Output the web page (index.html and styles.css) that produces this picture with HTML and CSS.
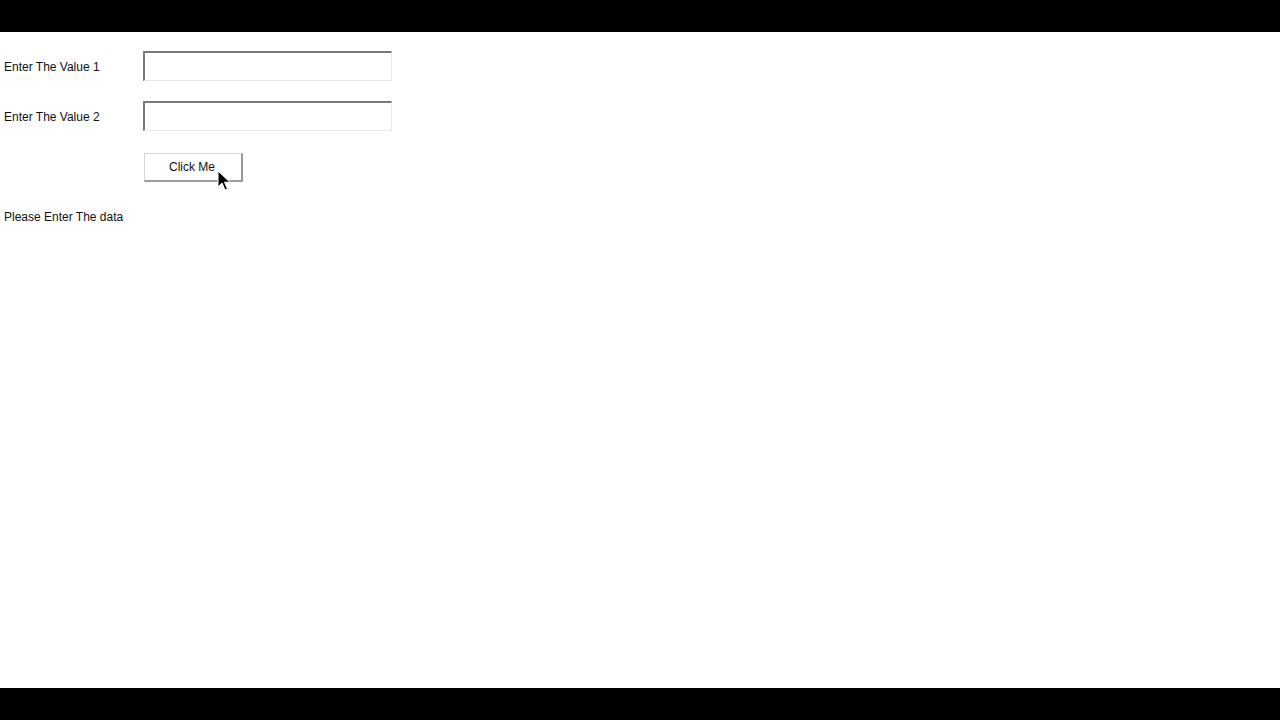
FILE: index.html
```html
<!DOCTYPE html>
<html>
<head>
<meta charset="utf-8">
<link rel="stylesheet" href="styles.css">
</head>
<body>
<div class="page">
  <div class="bar"></div>
  <main class="content">
    <div class="row">
      <label class="label" for="v1">Enter The Value 1</label>
      <input class="field" id="v1" type="text">
    </div>
    <div class="row row-2">
      <label class="label" for="v2">Enter The Value 2</label>
      <input class="field" id="v2" type="text">
    </div>
    <div class="row row-btn">
      <span class="label"></span>
      <div class="btn-wrap">
        <button class="btn" type="button">Click Me</button>
        <svg class="cursor" width="14" height="22" viewBox="0 0 14 22" aria-hidden="true">
          <path d="M1 1 L1 17 L5 13 L8 20 L10.5 19 L7.5 12.2 L13 12.2 Z" fill="#000" stroke="#fff" stroke-width="1"/>
        </svg>
      </div>
    </div>
    <p class="msg">Please Enter The data</p>
  </main>
  <div class="bar"></div>
</div>
</body>
</html>
```

FILE: styles.css
```css
html, body {
  margin: 0;
  padding: 0;
  background: #fff;
}
.page {
  height: 720px;
  display: flex;
  flex-direction: column;
  font-family: "Liberation Sans", Arial, sans-serif;
  font-size: 12px;
  color: #111;
}
.bar {
  height: 32px;
  background: #000;
  flex: none;
}
.content {
  flex: 1;
  padding: 19px 0 0 4px;
  display: flex;
  flex-direction: column;
}
.row {
  display: flex;
  align-items: center;
  height: 30px;
}
.row-2 {
  margin-top: 20px;
}
.label {
  width: 139px;
  flex: none;
  padding-top: 2px;
}
.field {
  box-sizing: border-box;
  width: 249px;
  height: 30px;
  margin: 0;
  padding: 2px 4px;
  background: #fff;
  border-style: solid;
  border-width: 2px 1px 1px 2px;
  border-color: #7a7a7a #e8e8e8 #e8e8e8 #7a7a7a;
  font: inherit;
  outline: none;
}
.row-btn {
  margin-top: 22px;
  height: 29px;
}
.btn-wrap {
  position: relative;
  margin-left: 1px;
}
.btn {
  box-sizing: border-box;
  width: 99px;
  height: 29px;
  margin: 0;
  padding: 0 2px 1px 0;
  background: #fff;
  border-style: solid;
  border-width: 1px 2px 2px 1px;
  border-color: #d4d4d4 #9a9a9a #9a9a9a #d4d4d4;
  font-family: "Liberation Sans", Arial, sans-serif;
  font-size: 12px;
  color: #111;
}
.cursor {
  position: absolute;
  left: 73px;
  top: 17px;
}
.msg {
  margin: 28px 0 0;
  line-height: 14px;
}
```
